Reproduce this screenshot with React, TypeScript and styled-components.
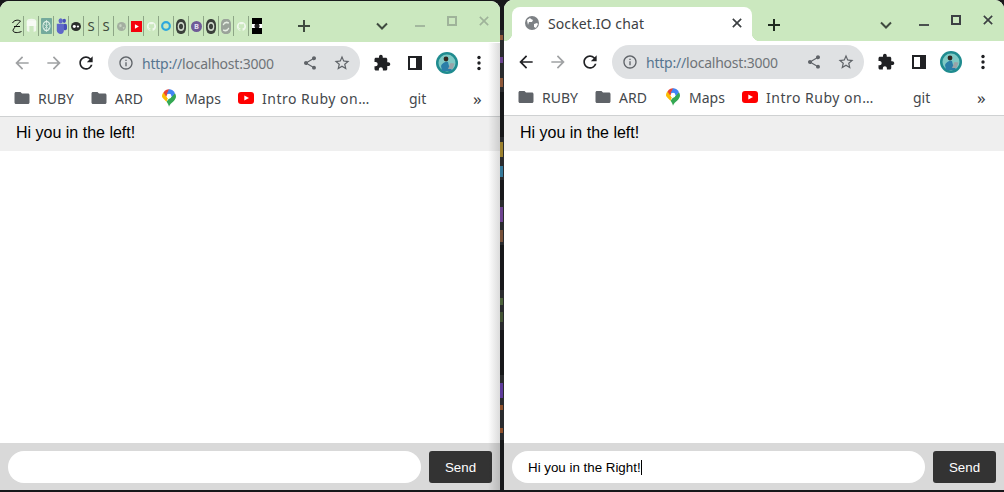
import styled, { createGlobalStyle } from 'styled-components'

const GlobalStyle = createGlobalStyle`
  html, body {
    margin: 0;
    padding: 0;
    background: #17181a;
  }
  * {
    box-sizing: border-box;
  }
`

const M = {
  back: 'M20 11H7.83l5.59-5.59L12 4 4 12l8 8 1.41-1.41L7.83 13H20v-2z',
  forward: 'M12 4l-1.41 1.41L16.17 11H4v2h12.17l-5.58 5.59L12 20l8-8z',
  reload:
    'M17.65 6.35A7.958 7.958 0 0 0 12 4c-4.42 0-7.99 3.58-7.99 8s3.57 8 7.99 8c3.73 0 6.84-2.55 7.73-6h-2.08A5.99 5.99 0 0 1 12 18c-3.31 0-6-2.69-6-6s2.69-6 6-6c1.66 0 3.14.69 4.22 1.78L13 11h7V4l-2.35 2.35z',
  info: 'M11 7h2v2h-2zm0 4h2v6h-2zm1-9C6.48 2 2 6.48 2 12s4.48 10 10 10 10-4.48 10-10S17.52 2 12 2zm0 18c-4.41 0-8-3.59-8-8s3.59-8 8-8 8 3.59 8 8-3.59 8-8 8z',
  share:
    'M18 16.08c-.76 0-1.44.3-1.96.77L8.91 12.7c.05-.23.09-.46.09-.7s-.04-.47-.09-.7l7.05-4.11c.54.5 1.25.81 2.04.81 1.66 0 3-1.34 3-3s-1.34-3-3-3-3 1.34-3 3c0 .24.04.47.09.7L8.04 9.81C7.5 9.31 6.79 9 6 9c-1.66 0-3 1.34-3 3s1.34 3 3 3c.79 0 1.5-.31 2.04-.81l7.12 4.16c-.05.21-.08.43-.08.65 0 1.61 1.31 2.92 2.92 2.92s2.92-1.31 2.92-2.92-1.31-2.92-2.92-2.92z',
  star: 'M22 9.24l-7.19-.62L12 2 9.19 8.63 2 9.24l5.46 4.73L5.82 21 12 17.27 18.18 21l-1.63-7.03L22 9.24zM12 15.4l-3.76 2.27 1-4.28-3.32-2.88 4.38-.38L12 6.1l1.71 4.04 4.38.38-3.32 2.88 1 4.28L12 15.4z',
  puzzle:
    'M20.5 11H19V7c0-1.1-.9-2-2-2h-4V3.5C13 2.12 11.88 1 10.5 1S8 2.12 8 3.5V5H4c-1.1 0-1.99.9-1.99 2v3.8H3.5c1.49 0 2.7 1.21 2.7 2.7s-1.21 2.7-2.7 2.7H2V20c0 1.1.9 2 2 2h3.8v-1.5c0-1.49 1.21-2.7 2.7-2.7 1.49 0 2.7 1.21 2.7 2.7V22H17c1.1 0 2-.9 2-2v-4h1.5c1.38 0 2.5-1.12 2.5-2.5S21.88 11 20.5 11z',
  folder:
    'M10 4H4c-1.1 0-1.99.9-1.99 2L2 18c0 1.1.9 2 2 2h16c1.1 0 2-.9 2-2V8c0-1.1-.9-2-2-2h-8l-2-2z',
  github:
    'M12 2C6.5 2 2 6.5 2 12c0 4.4 2.9 8.2 6.8 9.5.5.1.7-.2.7-.5v-1.7c-2.8.6-3.4-1.3-3.4-1.3-.5-1.2-1.1-1.5-1.1-1.5-.9-.6.1-.6.1-.6 1 .1 1.5 1 1.5 1 .9 1.5 2.3 1.1 2.9.8.1-.6.3-1.1.6-1.3-2.2-.3-4.5-1.1-4.5-4.9 0-1.1.4-2 1-2.7-.1-.3-.4-1.3.1-2.6 0 0 .8-.3 2.7 1a9.4 9.4 0 0 1 5 0c1.9-1.3 2.7-1 2.7-1 .5 1.4.2 2.4.1 2.6.6.7 1 1.6 1 2.7 0 3.8-2.3 4.7-4.5 4.9.4.3.7.9.7 1.9V21c0 .3.2.6.7.5 3.9-1.3 6.8-5.1 6.8-9.5C22 6.5 17.5 2 12 2z',
}

const Page = styled.div`
  display: flex;
  width: 1004px;
  height: 492px;
  padding-bottom: 2px;
  overflow: hidden;
`

const Window = styled.section<{ $raised?: boolean }>`
  position: relative;
  display: flex;
  flex-direction: column;
  width: 500px;
  height: ${(p) => (p.$raised ? 490 : 489)}px;
  margin-top: ${(p) => (p.$raised ? 0 : 1)}px;
  background: #fff;
  border-radius: 9px 9px 0 0;
  overflow: hidden;
  font-family: 'Noto Sans', sans-serif;
`

const EdgeShade = styled.div`
  position: absolute;
  top: 42px;
  right: 0;
  bottom: 0;
  width: 12px;
  background: linear-gradient(to right, rgba(0, 0, 0, 0), rgba(0, 0, 0, 0.14));
  pointer-events: none;
`

const Gutter = styled.div`
  display: flex;
  flex-direction: column;
  flex: none;
  width: 4px;
  height: 490px;
  padding-top: 30px;
  overflow: hidden;
`

const CodeBand = styled.div<{ $h: number; $gap: number }>`
  flex: none;
  width: 4px;
  height: ${(p) => p.$h}px;
  margin-bottom: ${(p) => p.$gap}px;
  background: #2a2b2e;
  overflow: hidden;
`

const CodeMark = styled.i<{ $color: string; $h: number; $top: number }>`
  display: block;
  width: 3px;
  height: ${(p) => p.$h}px;
  margin-top: ${(p) => p.$top}px;
  background: ${(p) => p.$color};
  opacity: 0.8;
`

const TabStrip = styled.header`
  display: flex;
  flex: none;
  align-items: flex-end;
  height: 41px;
  padding-left: 8px;
  background: #cbe8bf;
`

const ManyTabs = styled.div`
  display: flex;
  width: 255px;
  height: 26px;
  padding: 0 0 6px 1px;
`

const TinyTab = styled.div<{ $last?: boolean }>`
  display: flex;
  align-items: center;
  justify-content: center;
  width: 15px;
  flex: none;
  border-right: ${(p) => (p.$last ? 'none' : '1px solid #8da686')};
  font-size: 13px;
  color: #3e4a3d;
  svg {
    display: block;
  }
`

const ActiveTab = styled.div`
  position: relative;
  display: flex;
  align-items: center;
  width: 240px;
  height: 34px;
  padding: 0 10px 2px 12px;
  background: #fff;
  border-radius: 8px 8px 0 0;
  font-size: 14px;
  color: #3c4043;
  &::before,
  &::after {
    content: '';
    position: absolute;
    bottom: 0;
    width: 8px;
    height: 8px;
    background: radial-gradient(circle at var(--cx) 0, #cbe8bf 8px, #fff 8.5px);
  }
  &::before {
    --cx: 0;
    left: -8px;
  }
  &::after {
    --cx: 8px;
    right: -8px;
  }
`

const TabTitle = styled.span`
  flex: 1;
  margin-left: 8px;
  letter-spacing: 0.1px;
`

const StripControls = styled.div<{ $active?: boolean; $left: number }>`
  display: flex;
  align-items: center;
  height: 41px;
  margin-left: ${(p) => p.$left}px;
  color: ${(p) => (p.$active ? '#3c4043' : '#9fb39a')};
`

const NewTab = styled.span<{ $active?: boolean }>`
  display: flex;
  width: 16px;
  margin-top: 8px;
  color: ${(p) => (p.$active ? '#1f2a1f' : '#3f4a3f')};
`

const Chevron = styled.span<{ $left: number }>`
  display: flex;
  width: 16px;
  margin: 8px 0 0 ${(p) => p.$left}px;
  color: #3f4a3f;
`

const Minimize = styled.span`
  width: 10px;
  height: 2px;
  margin: 8px 0 0 25px;
  background: currentColor;
  opacity: 0.9;
`

const Maximize = styled.span`
  width: 10px;
  height: 10px;
  margin: -2px 0 0 22px;
  border: 2px solid currentColor;
`

const CloseX = styled.span`
  display: flex;
  width: 10px;
  margin: -2px 0 0 22px;
`

const Toolbar = styled.nav`
  display: flex;
  flex: none;
  align-items: center;
  height: 42px;
  padding-left: 6px;
  background: #fff;
`

const ToolButton = styled.span<{ $color?: string; $w?: number }>`
  display: flex;
  flex: none;
  align-items: center;
  justify-content: center;
  width: ${(p) => p.$w || 32}px;
  height: 32px;
  color: ${(p) => p.$color || '#202124'};
`

const Omnibox = styled.div`
  display: flex;
  align-items: center;
  width: 252px;
  height: 34px;
  margin: 0 6px 0 6px;
  padding: 0 2px 0 10px;
  background: #dfe1e3;
  border-radius: 17px;
  font-size: 14px;
  color: #6f7478;
`

const OmniIcon = styled.span<{ $left?: number }>`
  display: flex;
  margin-left: ${(p) => p.$left || 0}px;
  color: #5f6368;
`

const Url = styled.span`
  width: 152px;
  margin-left: 8px;
  letter-spacing: -0.22px;
  white-space: nowrap;
  b {
    font-weight: 400;
    color: #567590;
  }
`

const Bookmarks = styled.div`
  display: flex;
  flex: none;
  align-items: center;
  height: 33px;
  padding: 0 0 4px 13px;
  background: #fff;
  border-bottom: 1px solid #cfd1d2;
  font-size: 14px;
  color: #3c4043;
`

const Bookmark = styled.span<{ $w: number; $gap?: number; $spaced?: boolean }>`
  display: flex;
  flex: none;
  align-items: center;
  gap: ${(p) => p.$gap || 7}px;
  width: ${(p) => p.$w}px;
  color: #44484c;
  letter-spacing: ${(p) => (p.$spaced ? '0.5px' : '0')};
  white-space: nowrap;
`

const GitMark = styled(Bookmark)`
  margin-left: 1px;
`

const MoreMarks = styled.span`
  flex: none;
  margin-left: 43px;
  font-size: 17px;
  line-height: 1;
  color: #3c4043;
`

const Chat = styled.main`
  display: flex;
  flex: 1;
  flex-direction: column;
  font-family: 'Liberation Sans', sans-serif;
`

const Messages = styled.ul`
  flex: 1;
  margin: 0;
  padding: 0;
  list-style: none;
`

const Message = styled.li<{ $tall?: boolean }>`
  height: ${(p) => (p.$tall ? 35 : 34)}px;
  padding: ${(p) => (p.$tall ? 8 : 7)}px 16px 0;
  background: #efefef;
  font-size: 16px;
  line-height: 18px;
  color: #000;
`

const Composer = styled.form`
  display: flex;
  flex: none;
  gap: 8px;
  height: 47px;
  padding: 8px;
  background: #d9d9d9;
`

const Field = styled.div`
  display: flex;
  align-items: center;
  width: 413px;
  height: 32px;
  padding: 0 16px;
  background: #fff;
  border-radius: 16px;
  font-size: 13.33px;
  color: #000;
`

const Caret = styled.span`
  width: 1px;
  height: 15px;
  background: #000;
`

const SendButton = styled.button`
  width: 63px;
  height: 32px;
  padding: 0;
  border: none;
  border-radius: 3px;
  background: #333;
  color: #fff;
  font-family: 'Liberation Sans', sans-serif;
  font-size: 13.33px;
`

function Icon({ d, size = 20 }: { d: string; size?: number }) {
  return (
    <svg width={size} height={size} viewBox="0 0 24 24" fill="currentColor">
      <path d={d} />
    </svg>
  )
}

function Folder() {
  return (
    <svg width="18" height="18" viewBox="0 0 24 24" fill="#5f6368">
      <path d={M.folder} />
    </svg>
  )
}

function MapsPin() {
  return (
    <svg width="14" height="18" viewBox="0 0 16 20">
      <path d="M8 20c-.5-2.600-1.600-4.100-2.900-5.800L11 7l3.800-2.300C15.500 5.900 16 6.800 16 8c0 2.300-1.200 3.800-2.500 5.400C11 15.700 8.600 17.300 8 20z" fill="#34a853" />
      <path d="M5.100 14.200 2 11C.8 10 0 9 0 8c0-1.700.6-3.200 1.700-4.400L8.500 6 5.100 14.200z" fill="#fbbc04" />
      <path d="M1.700 3.600C3.200 1.400 5.500 0 8 0l2.500 2.600L5 8.500z" fill="#ea4335" />
      <path d="M8 0c3 0 5.500 1.700 6.800 4.700L10.800 9 5.400 5.400z" fill="#4285f4" />
      <circle cx="8" cy="8" r="2.800" fill="#fff" />
    </svg>
  )
}

function YouTube() {
  return (
    <svg width="16" height="12" viewBox="0 0 16 12">
      <rect width="16" height="12" rx="3" fill="#f00" />
      <path d="M6.300 3.400 11 6l-4.700 2.600z" fill="#fff" />
    </svg>
  )
}

function Avatar() {
  return (
    <svg width="22" height="22" viewBox="0 0 22 22">
      <circle cx="11" cy="11" r="11" fill="#1f8b8f" />
      <circle cx="11" cy="11" r="8.500" fill="#7fc9c4" />
      <path d="M5 14c1-3 5-5 7-4l1 4 3 2-1 3H6z" fill="#2b7ea8" />
      <circle cx="10" cy="7" r="2.400" fill="#33261f" />
      <path d="M12 17l2.500-6 4 .5-2 5.500z" fill="#9aa3a8" />
    </svg>
  )
}

function Curl() {
  return (
    <svg width="11" height="15" viewBox="0 0 11 15" fill="none" stroke="#111" strokeWidth="1">
      <path d="M1.500 4C3 1 7 .5 9.500 2 7 5 3.500 8 2 11c-.5 2.500 4 3.500 8.500 1.500M3 7.500h6" />
    </svg>
  )
}

function Favicon({ kind }: { kind: number }) {
  if (kind === 0) return <Curl />
  if (kind === 1)
    return (
      <svg width="11" height="16" viewBox="0 0 13 16" preserveAspectRatio="none">
        <path d="M1 3c0-3 11-3 11 0v10l-3 1V8H4v6l-3-1z" fill="#f2f7ef" />
        <path d="M1 3h11v5H1z" fill="#f7fbf5" />
      </svg>
    )
  if (kind === 2)
    return (
      <svg width="11" height="16" viewBox="0 0 14 16" preserveAspectRatio="none">
        <rect width="14" height="16" rx="1" fill="#74aa9c" />
        <circle cx="7" cy="8" r="4.500" fill="none" stroke="#dff0e6" strokeWidth="1.300" />
        <path d="M3 5l7 6M11 5l-7 6M7 2v12" stroke="#dff0e6" strokeWidth=".8" />
      </svg>
    )
  if (kind === 3)
    return (
      <svg width="11" height="16" viewBox="0 0 14 17" preserveAspectRatio="none">
        <circle cx="10.500" cy="3" r="2.200" fill="#464eb8" />
        <circle cx="6" cy="3" r="2.800" fill="#5f67c9" />
        <rect x="9" y="6" width="5" height="7" rx="2" fill="#464eb8" />
        <path d="M1 6h9v7c0 2-1 4-4 4s-5-2-5-4z" fill="#5f67c9" />
      </svg>
    )
  if (kind === 4)
    return (
      <svg width="10" height="9" viewBox="0 0 13 13" preserveAspectRatio="none">
        <circle cx="6.500" cy="6.500" r="6.500" fill="#2b2f2b" />
        <circle cx="4.300" cy="6.500" r="2" fill="#fff" />
        <circle cx="9" cy="6.500" r="1.500" fill="#fff" />
      </svg>
    )
  if (kind === 5 || kind === 6) return <span>S</span>
  if (kind === 7)
    return (
      <svg width="9" height="9" viewBox="0 0 13 13">
        <circle cx="6.500" cy="6.500" r="6.500" fill="#a3afa0" />
        <path d="M3 4l3-1 1 3-3 2zM8 8l3-1-1 4z" fill="#c9d6c4" />
      </svg>
    )
  if (kind === 8)
    return (
      <svg width="11" height="11" viewBox="0 0 14 14">
        <rect width="14" height="14" fill="#f5000c" />
        <path d="M5 4l5 3-5 3z" fill="#fff" />
      </svg>
    )
  if (kind === 9 || kind === 15)
    return (
      <svg width="11" height="11" viewBox="0 0 24 24" fill="#f1f8ee">
        <path d={M.github} />
      </svg>
    )
  if (kind === 10)
    return (
      <svg width="10" height="10" viewBox="0 0 13 13">
        <circle cx="6.500" cy="6.500" r="5" fill="none" stroke="#2fa8dc" strokeWidth="2.800" />
      </svg>
    )
  if (kind === 11 || kind === 13)
    return (
      <svg width="10" height="15" viewBox="0 0 14 15" preserveAspectRatio="none">
        <rect width="14" height="15" rx="6" fill="#3b403b" />
        <circle cx="7" cy="7.500" r="4.600" fill="#cfd8cc" />
        <circle cx="7" cy="7.500" r="2.800" fill="#3b403b" />
      </svg>
    )
  if (kind === 12)
    return (
      <svg width="11" height="11" viewBox="0 0 14 14">
        <circle cx="7" cy="7" r="7" fill="#6f5b97" />
        <text x="7" y="10.300" textAnchor="middle" fontSize="9.500" fontWeight="700" fill="#e6e0f0" fontFamily="Noto Sans, sans-serif">
          B
        </text>
      </svg>
    )
  if (kind === 14)
    return (
      <svg width="10" height="15" viewBox="0 0 14 15" preserveAspectRatio="none">
        <rect width="14" height="15" rx="5" fill="#9aa39a" />
        <path d="M3 6c2-3 5-3 8-2M11 9c-2 3-5 3-8 2" stroke="#e6eee3" strokeWidth="1.600" fill="none" />
      </svg>
    )
  return (
    <svg width="10" height="16" viewBox="0 0 13 16" preserveAspectRatio="none">
      <rect width="13" height="16" fill="#000" />
      <rect y="6" width="13" height="4" fill="#fff" />
      <path d="M4 6h5l1 2-1 2H4L3 8z" fill="#222" />
    </svg>
  )
}

function Cross({ size = 10, width = 2 }: { size?: number; width?: number }) {
  return (
    <svg width={size} height={size} viewBox="0 0 12 12" stroke="currentColor" strokeWidth={width}>
      <path d="M1 1l10 10M11 1L1 11" />
    </svg>
  )
}

function Plus() {
  return (
    <svg width="16" height="16" viewBox="0 0 16 16" stroke="currentColor" strokeWidth="2">
      <path d="M8 2v12M2 8h12" />
    </svg>
  )
}

function Down() {
  return (
    <svg width="16" height="16" viewBox="0 0 16 16" fill="none" stroke="currentColor" strokeWidth="2">
      <path d="M3 5.500l5 5 5-5" />
    </svg>
  )
}

function SidePanel() {
  return (
    <svg width="20" height="20" viewBox="0 0 20 20">
      <path fillRule="evenodd" d="M3 3h14v14H3zM5 5v10h6V5z" fill="currentColor" />
    </svg>
  )
}

function Dots() {
  return (
    <svg width="20" height="20" viewBox="0 0 20 20" fill="currentColor">
      <circle cx="10" cy="4.500" r="1.700" />
      <circle cx="10" cy="10" r="1.700" />
      <circle cx="10" cy="15.500" r="1.700" />
    </svg>
  )
}

function BrowserChrome({ active }: { active?: boolean }) {
  return (
    <>
      <TabStrip>
        {active ? (
          <ActiveTab>
            <svg width="16" height="16" viewBox="0 0 16 16">
              <circle cx="8" cy="8" r="7" fill="#7d8185" />
              <path d="M3 5l3-2 1 1 2 1-1 2-3 0-1 3zM10 9l3-1 1 1-2 4-2-1z" fill="#fff" />
            </svg>
            <TabTitle>Socket.IO chat</TabTitle>
            <Cross />
          </ActiveTab>
        ) : (
          <ManyTabs>
            {Array.from({ length: 17 }, (_, i) => (
              <TinyTab key={i} $last={i === 16}>
                <Favicon kind={i} />
              </TinyTab>
            ))}
          </ManyTabs>
        )}
        <StripControls $active={active} $left={active ? 14 : 33}>
          <NewTab $active={active}>
            <Plus />
          </NewTab>
          <Chevron $left={active ? 96 : 62}>
            <Down />
          </Chevron>
          <Minimize />
          <Maximize />
          <CloseX>
            <Cross />
          </CloseX>
        </StripControls>
      </TabStrip>
      <Toolbar>
        <ToolButton $color={active ? '#202124' : '#a0a2a4'}>
          <Icon d={M.back} />
        </ToolButton>
        <ToolButton $color="#a0a2a4">
          <Icon d={M.forward} />
        </ToolButton>
        <ToolButton>
          <Icon d={M.reload} />
        </ToolButton>
        <Omnibox>
          <OmniIcon>
            <Icon d={M.info} size={16} />
          </OmniIcon>
          <Url>
            <b>http://</b>localhost:3000
          </Url>
          <OmniIcon $left={8}>
            <Icon d={M.share} size={16} />
          </OmniIcon>
          <OmniIcon $left={15}>
            <Icon d={M.star} size={18} />
          </OmniIcon>
        </Omnibox>
        <ToolButton>
          <Icon d={M.puzzle} size={18} />
        </ToolButton>
        <ToolButton $w={33}>
          <SidePanel />
        </ToolButton>
        <ToolButton>
          <Avatar />
        </ToolButton>
        <ToolButton>
          <Dots />
        </ToolButton>
      </Toolbar>
      <Bookmarks>
        <Bookmark $w={77}>
          <Folder />
          RUBY
        </Bookmark>
        <Bookmark $w={72}>
          <Folder />
          ARD
        </Bookmark>
        <Bookmark $w={76} $gap={9}>
          <MapsPin />
          Maps
        </Bookmark>
        <Bookmark $w={170} $gap={8} $spaced>
          <YouTube />
          Intro Ruby on…
        </Bookmark>
        <GitMark $w={21}>git</GitMark>
        <MoreMarks>»</MoreMarks>
      </Bookmarks>
    </>
  )
}

const gutterBands = [
  {
    $h: 62,
    $gap: 45,
    marks: [
      { $color: '#a8643c', $h: 5, $top: 5 },
      { $color: '#7a4aa8', $h: 6, $top: 17 },
      { $color: '#a8643c', $h: 9, $top: 15 },
    ],
  },
  {
    $h: 43,
    $gap: 20,
    marks: [
      { $color: '#b8962e', $h: 15, $top: 5 },
      { $color: '#3a8fb7', $h: 11, $top: 9 },
    ],
  },
  {
    $h: 45,
    $gap: 45,
    marks: [
      { $color: '#7e4aa8', $h: 15, $top: 7 },
      { $color: '#8a5a3c', $h: 12, $top: 8 },
    ],
  },
  {
    $h: 40,
    $gap: 45,
    marks: [
      { $color: '#55703f', $h: 7, $top: 8 },
      { $color: '#4a5e36', $h: 10, $top: 7 },
    ],
  },
  {
    $h: 65,
    $gap: 0,
    marks: [
      { $color: '#6a3fb5', $h: 15, $top: 8 },
      { $color: '#a85a2c', $h: 5, $top: 7 },
      { $color: '#a85a2c', $h: 5, $top: 18 },
    ],
  },
]

export default function App() {
  return (
    <Page>
      <GlobalStyle />
      <Window>
        <BrowserChrome />
        <Chat>
          <Messages>
            <Message>Hi you in the left!</Message>
          </Messages>
          <Composer>
            <Field />
            <SendButton type="button">Send</SendButton>
          </Composer>
        </Chat>
        <EdgeShade />
      </Window>
      <Gutter>
        {gutterBands.map(({ marks, ...band }, i) => (
          <CodeBand key={i} {...band}>
            {marks.map((m, j) => (
              <CodeMark key={j} {...m} />
            ))}
          </CodeBand>
        ))}
      </Gutter>
      <Window $raised>
        <BrowserChrome active />
        <Chat>
          <Messages>
            <Message $tall>Hi you in the left!</Message>
          </Messages>
          <Composer>
            <Field>
              Hi you in the Right!
              <Caret />
            </Field>
            <SendButton type="button">Send</SendButton>
          </Composer>
        </Chat>
      </Window>
    </Page>
  )
}
